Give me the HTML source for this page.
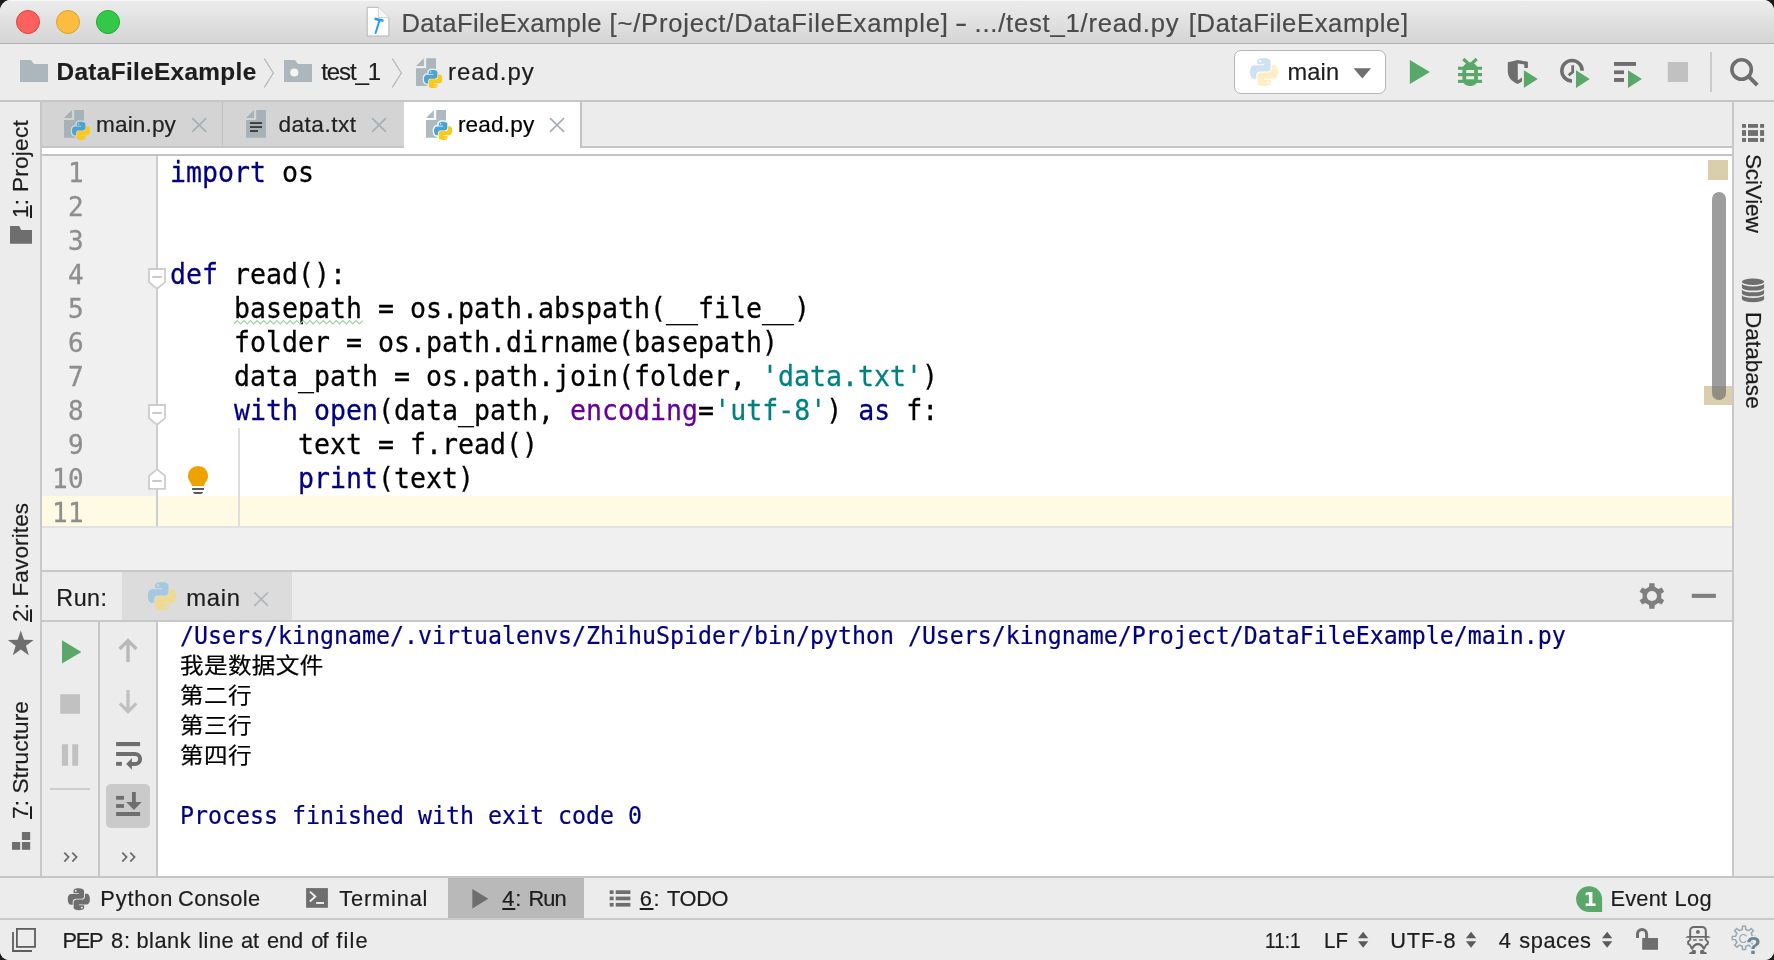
<!DOCTYPE html>
<html lang="en">
<head>
<meta charset="utf-8">
<title>DataFileExample - read.py</title>
<style>
*{box-sizing:border-box;margin:0;padding:0}
html,body{width:1774px;height:960px;overflow:hidden;background:#1c1c1c}
body{font-family:"Liberation Sans","Noto Sans CJK SC",sans-serif;color:#1d1d1d;position:relative}
#win{position:absolute;left:0;top:0;width:1774px;height:960px;background:#ececec;border-radius:11px 11px 9px 9px;overflow:hidden;will-change:transform}
.abs{position:absolute}
.t{position:absolute;white-space:nowrap;line-height:1;-webkit-text-stroke:.2px}
svg{position:absolute;overflow:visible}
/* title bar */
#titlebar{left:0;top:0;width:1774px;height:44px;background:linear-gradient(#ececec 0%,#e8e8e8 20%,#d5d5d5 100%);border-bottom:1px solid #b1b1b1;box-shadow:inset 0 1px 0 rgba(255,255,255,.55)}
.tl{position:absolute;top:10px;width:24px;height:24px;border-radius:50%}
#title{left:401.4px;top:11px;font-size:25.6px;color:#4a4a4a;white-space:pre}
#title span,.w span{position:absolute;top:0;white-space:pre}
/* nav bar */
#nav{left:0;top:44px;width:1774px;height:58px;background:#ececec;border-bottom:2px solid #c6c6c6}
/* stripes */
#lstripe{left:0;top:102px;width:42px;height:774px;background:#ececec;border-right:2px solid #c8c8c8}
#rstripe{left:1732px;top:102px;width:42px;height:774px;background:#ececec;border-left:2px solid #c8c8c8}
.vt{position:absolute;white-space:nowrap;line-height:1;font-size:22.6px;transform-origin:0 0;-webkit-text-stroke:.2px}
/* tabs */
#tabs{left:42px;top:102px;width:1690px;height:46px;background:#ececec}
.tab{position:absolute;top:0;height:46px;background:#d4d4d4;border-right:1.5px solid #c2c2c2;border-bottom:2px solid #c5c5c5}
.tab.act{background:#fff;border-right:2px solid #c4c4c4}
.tabt{font-size:22.6px;top:11.7px;color:#222}
/* editor */
#edtop{left:42px;top:154px;width:1690px;height:2px;background:#c3c3c3;z-index:2}
#editor{left:42px;top:155px;width:1690px;height:372px;background:#fff}
#gutter{left:0;top:0;width:115px;height:372px;background:#f0f0f0;border-right:1px solid #d2d2d2}
.code{position:absolute;left:128px;margin-top:1px;white-space:pre;font-family:"DejaVu Sans Mono","Liberation Mono",monospace;font-size:26.58px;line-height:34px;height:34px;color:#000;-webkit-text-stroke:.25px;transform:scaleY(1.035);transform-origin:0 27px}
.ln{position:absolute;right:1648px;margin-top:1px;white-space:pre;font-family:"DejaVu Sans Mono","Liberation Mono",monospace;font-size:26px;letter-spacing:.35px;line-height:34px;height:34px;color:#8e8e8e;-webkit-text-stroke:.3px}
.cj{font-family:"Noto Sans CJK SC",sans-serif;font-size:21.8px;letter-spacing:.38px;position:relative;top:-2px;display:inline-block;transform:scaleX(1.08);transform-origin:0 0}
.k{color:#000080}.s{color:#008080}.p{color:#660099}
/* run */
#runhead{left:42px;top:570px;width:1690px;height:52px;background:#ececec;border-top:2px solid #c8c8c8;border-bottom:2px solid #c8c8c8}
#gap{left:42px;top:526px;width:1690px;height:44px;background:#f0f0f0;border-top:2px solid #e2e2e2}
#runbody{left:42px;top:622px;width:1690px;height:254px;background:#fff}
.con{position:absolute;left:138px;margin-top:-1px;white-space:pre;font-family:"DejaVu Sans Mono","Noto Sans CJK SC",monospace;font-size:23.25px;line-height:30px;height:30px;color:#000;-webkit-text-stroke:.22px}
/* bottom */
#bbar{left:0;top:876px;width:1774px;height:44px;background:#ececec;border-top:2px solid #c6c6c6;border-bottom:2px solid #c8c8c8}
#status{left:0;top:920px;width:1774px;height:40px;background:#ececec}
.u{font-size:21.8px;top:10.25px}
.la{transform:scaleY(1.05);transform-origin:0 23px}
</style>
</head>
<body>
<div id="win">

<!-- TITLE BAR -->
<div id="titlebar" class="abs">
  <div class="tl" style="left:16px;background:#fc615d;border:1px solid #e0443e"></div>
  <div class="tl" style="left:56px;background:#fdbc40;border:1px solid #dea123"></div>
  <div class="tl" style="left:96px;background:#34c84a;border:1px solid #1aab29"></div>
  <div id="title" class="t"><span style="left:0;letter-spacing:.368px">DataFileExample </span><span style="left:208.2px;letter-spacing:.784px">[~/Project/DataFileExample] </span><span style="left:553.2px;transform:scaleX(1.45);transform-origin:0 0">- </span><span style="left:573.1px;letter-spacing:.786px">.../test_1/read.py </span><span style="left:787.4px;letter-spacing:.638px">[DataFileExample]</span></div>
</div>

<!-- NAV BAR -->
<div id="nav" class="abs">
  <div class="t" style="left:56.5px;top:16.3px;font-size:24.3px;font-weight:bold;letter-spacing:.375px;color:#1d1d1d">DataFileExample</div>
  <div class="t" style="left:321.2px;top:16.4px;font-size:24px;letter-spacing:-1.08px;color:#1d1d1d">test_1</div>
  <div class="t" style="left:448px;top:16.4px;font-size:24px;letter-spacing:.95px;color:#1d1d1d">read.py</div>
  <div class="abs" style="left:1234px;top:6px;width:152px;height:44px;background:#fff;border:1.5px solid #b4b4b4;border-radius:7px"></div>
  <div class="t" style="left:1287.5px;top:16.6px;font-size:23.6px;letter-spacing:.13px;color:#1d1d1d">main</div>
  <div class="abs" style="left:1710px;top:8px;width:2px;height:40px;background:#cbcbcb"></div>
</div>

<!-- LEFT STRIPE -->
<div id="lstripe" class="abs">
  <div class="vt" style="left:9.6px;top:115.5px;transform:rotate(-90deg);letter-spacing:.26px"><u>1</u>: Project</div>
  <div class="vt" style="left:9.6px;top:519.7px;transform:rotate(-90deg);letter-spacing:.1px"><u>2</u>: Favorites</div>
  <div class="vt" style="left:9.6px;top:717.2px;transform:rotate(-90deg);letter-spacing:.1px"><u>7</u>: Structure</div>
</div>

<!-- RIGHT STRIPE -->
<div id="rstripe" class="abs">
  <div class="vt" style="left:29.5px;top:52.0px;transform:rotate(90deg);letter-spacing:-.2px">SciView</div>
  <div class="vt" style="left:29.5px;top:209.5px;transform:rotate(90deg)">Database</div>
</div>

<!-- TABS -->
<div id="tabs" class="abs">
  <div class="abs" style="left:0;top:0;width:1690px;height:46px;border-bottom:2px solid #c5c5c5"></div>
  <div class="tab" style="left:0;width:181px"></div>
  <div class="tab" style="left:181px;width:181px;border-right:none"></div>
  <div class="tab act" style="left:362px;width:178px;height:51px;border-bottom:none"></div>
  <div class="abs" style="left:0;top:46px;width:1690px;height:6px;background:#fff"></div>
  <div class="t tabt" style="left:54px;letter-spacing:.13px">main.py</div>
  <div class="t tabt" style="left:236.5px;letter-spacing:.48px">data.txt</div>
  <div class="t tabt" style="left:415.9px;letter-spacing:.17px;color:#000">read.py</div>
</div>

<!-- EDITOR -->
<div id="edtop" class="abs"></div>
<div id="editor" class="abs">
  <div id="gutter" class="abs"></div>
  <div class="abs" style="left:0;top:341px;width:1690px;height:31px;background:#fffae3"></div>
  <div class="abs" style="left:114px;top:0;width:2px;height:372px;background:#cdcdcd"></div>
  <div class="abs" style="left:196px;top:273px;width:2px;height:99px;background:#dedede"></div>
  <div class="ln" style="top:0px">1</div><div class="code" style="top:0px"><span class="k">import</span> os</div>
  <div class="ln" style="top:34px">2</div><div class="code" style="top:34px"></div>
  <div class="ln" style="top:68px">3</div><div class="code" style="top:68px"></div>
  <div class="ln" style="top:102px">4</div><div class="code" style="top:102px"><span class="k">def</span> read():</div>
  <div class="ln" style="top:136px">5</div><div class="code" style="top:136px">    <span class="w">basepath</span> = os.path.abspath(__file__)</div>
  <div class="ln" style="top:170px">6</div><div class="code" style="top:170px">    folder = os.path.dirname(basepath)</div>
  <div class="ln" style="top:204px">7</div><div class="code" style="top:204px">    data_path = os.path.join(folder, <span class="s">'data.txt'</span>)</div>
  <div class="ln" style="top:238px">8</div><div class="code" style="top:238px">    <span class="k">with</span> <span class="k">open</span>(data_path, <span class="p">encoding</span>=<span class="s">'utf-8'</span>) <span class="k">as</span> f:</div>
  <div class="ln" style="top:272px">9</div><div class="code" style="top:272px">        text = f.read()</div>
  <div class="ln" style="top:306px">10</div><div class="code" style="top:306px">        <span class="k">print</span>(text)</div>
  <div class="ln" style="top:340px">11</div><div class="code" style="top:340px"></div>
  <div class="abs" style="left:1666px;top:5px;width:20px;height:20px;background:#d9cfad"></div>
  <div class="abs" style="left:1662px;top:231px;width:28px;height:19px;background:#d9cfad"></div>
  <div class="abs" style="left:1670px;top:37px;width:14px;height:208px;border-radius:7px;background:rgba(110,110,110,.68)"></div>
</div>

<!-- RUN -->
<div id="gap" class="abs"></div>
<div id="runhead" class="abs">
  <div class="abs" style="left:80px;top:0;width:170px;height:48px;background:#dcdcdc"></div>
  <div class="t" style="left:14.3px;top:15.1px;font-size:23.3px;letter-spacing:.52px">Run:</div>
  <div class="t" style="left:144.2px;top:13.7px;font-size:23.8px;letter-spacing:.78px">main</div>
</div>
<div id="runbody" class="abs">
  <div class="abs" style="left:0;top:0;width:115px;height:255px;background:#ececec"></div>
  <div class="abs" style="left:56px;top:0;width:2px;height:255px;background:#c6c6c6"></div>
  <div class="abs" style="left:114px;top:0;width:2px;height:255px;background:#c6c6c6"></div>
  <div class="abs" style="left:64px;top:162px;width:44px;height:44px;border-radius:5px;background:#cacaca"></div>
  <div class="abs" style="left:8px;top:166px;width:40px;height:2px;background:#cdcdcd"></div>
  <div class="con la" style="top:0px"><span class="k">/Users/kingname/.virtualenvs/ZhihuSpider/bin/python /Users/kingname/Project/DataFileExample/main.py</span></div>
  <div class="con" style="top:30px"><span class="cj">我是数据文件</span></div>
  <div class="con" style="top:60px"><span class="cj">第二行</span></div>
  <div class="con" style="top:90px"><span class="cj">第三行</span></div>
  <div class="con" style="top:120px"><span class="cj">第四行</span></div>
  <div class="con" style="top:150px"></div>
  <div class="con la" style="top:180px"><span class="k">Process finished with exit code 0</span></div>
</div>

<!-- BOTTOM BAR -->
<div id="bbar" class="abs">
  <div class="abs" style="left:448px;top:0;width:136px;height:40px;background:#b9b9b9"></div>
  <div class="t u w" style="left:100.3px"><span style="left:0.0px;letter-spacing:0.83px">Python </span><span style="left:77.8px;letter-spacing:0.34px">Console</span></div>
  <div class="t u" style="left:339.3px;letter-spacing:.825px">Terminal</div>
  <div class="t u w" style="left:502.3px"><span style="left:0.0px;letter-spacing:0.88px"><u>4</u>: </span><span style="left:26.1px;letter-spacing:-0.93px">Run</span></div>
  <div class="t u w" style="left:639.7px"><span style="left:0.0px;letter-spacing:1.68px"><u>6</u>: </span><span style="left:27.4px;letter-spacing:-0.41px">TODO</span></div>
  <div class="t u w" style="left:1610.4px"><span style="left:0;letter-spacing:.255px">Event </span><span style="left:64.1px;letter-spacing:.328px">Log</span></div>
  <div class="t" style="left:1583.5px;top:11.6px;font-family:'DejaVu Sans','Liberation Sans',sans-serif;font-size:19.2px;font-weight:bold;color:#fff;z-index:5;-webkit-text-stroke:0">1</div>
</div>

<!-- STATUS -->
<div id="status" class="abs">
  <div class="t u w" style="left:62.6px"><span style="left:0.0px;letter-spacing:-1.34px">PEP </span><span style="left:48.5px;letter-spacing:0.78px">8: </span><span style="left:73.9px;letter-spacing:0.50px">blank </span><span style="left:135.7px;letter-spacing:0.50px">line </span><span style="left:178.3px;letter-spacing:0.08px">at </span><span style="left:204.4px;letter-spacing:-0.12px">end </span><span style="left:248.6px;letter-spacing:-0.92px">of </span><span style="left:273.6px;letter-spacing:1.19px">file</span></div>
  <div class="t u" style="left:1265.3px;transform:scaleX(.872);transform-origin:0 0">11:1</div>
  <div class="t u" style="left:1324.2px;transform:scaleX(.94);transform-origin:0 0">LF</div>
  <div class="t u" style="left:1390.2px;letter-spacing:.893px">UTF-8</div>
  <div class="t u w" style="left:1498.8px"><span style="left:0.0px;letter-spacing:0.00px">4 </span><span style="left:20.5px;letter-spacing:0.53px">spaces</span></div>
</div>


<!-- ICON OVERLAY -->
<svg id="ico" width="1774" height="960" viewBox="0 0 1774 960" style="left:0;top:0;pointer-events:none">
<defs>
  <g id="pyb"><path d="M7.93,1 C4.4,1 4.62,2.55 4.62,2.55 L4.62,4.16 L7.99,4.16 L7.99,4.64 L3.28,4.64 C3.28,4.64 1,4.38 1,7.96 C1,11.54 2.98,11.41 2.98,11.41 L4.15,11.41 L4.15,9.75 C4.15,9.75 4.09,7.76 6.09,7.76 L9.43,7.76 C9.43,7.76 11.3,7.79 11.3,5.94 L11.3,2.88 C11.3,2.88 11.58,1 7.93,1 Z M6.08,2.08 C6.41,2.08 6.68,2.35 6.68,2.68 C6.68,3.02 6.41,3.29 6.08,3.29 C5.74,3.29 5.47,3.02 5.47,2.68 C5.47,2.35 5.74,2.08 6.08,2.08 Z"/></g>
  <g id="pyy"><path d="M8.07,15 C11.6,15 11.38,13.45 11.38,13.45 L11.38,11.84 L8.01,11.84 L8.01,11.36 L12.72,11.36 C12.72,11.36 15,11.62 15,8.04 C15,4.46 13.02,4.59 13.02,4.59 L11.85,4.59 L11.85,6.25 C11.85,6.25 11.91,8.24 9.91,8.24 L6.57,8.24 C6.57,8.24 4.7,8.21 4.7,10.06 L4.7,13.12 C4.7,13.12 4.42,15 8.07,15 Z M9.92,13.92 C9.59,13.92 9.32,13.65 9.32,13.32 C9.32,12.98 9.59,12.71 9.92,12.71 C10.26,12.71 10.53,12.98 10.53,13.32 C10.53,13.65 10.26,13.92 9.92,13.92 Z"/></g>
  <g id="pyfile">
    <path d="M10.2,0 H20 V27.8 H0 V10.1 H10.2 Z" fill="#9aa7b0" fill-opacity=".8"/>
    <path d="M0,7.9 L7.9,0 V7.9 Z" fill="#9aa7b0" fill-opacity=".8"/>
    <g transform="translate(6.7,10.4) scale(1.3)">
      <use href="#pyb" fill="none" stroke="var(--bg,#ececec)" stroke-width="2.2"/>
      <use href="#pyy" fill="none" stroke="var(--bg,#ececec)" stroke-width="2.2"/>
      <use href="#pyb" fill="#4aa3d3"/><use href="#pyy" fill="#fcc917"/>
    </g>
  </g>
  <g id="closex"><path d="M0,0 L14,13.7 M14,0 L0,13.7" stroke="#a7afb5" stroke-width="1.7" fill="none"/></g>
</defs>

<!-- nav icons -->
<g id="navico">
  <path d="M20,60 h11 l3,4 h14 v18 h-28 z" fill="#abb6bd"/>
  <path d="M264.3,58.6 L273.3,73 L264.3,87.4" fill="none" stroke="#b8b8b8" stroke-width="1.3"/>
  <path d="M284,60 h11 l3,4 h14 v18 h-28 z" fill="#abb6bd"/>
  <circle cx="294.3" cy="72.5" r="4.1" fill="#f4f4f4"/>
  <path d="M392.3,58.6 L401.3,73 L392.3,87.4" fill="none" stroke="#b8b8b8" stroke-width="1.3"/>
  <use href="#pyfile" x="416" y="58.2"/>
  <!-- run config python (faded) -->
  <g transform="translate(1248,56) scale(2)"><use href="#pyb" fill="#cfe2f0"/><use href="#pyy" fill="#fcefc6"/></g>
  <path d="M1353.6,68.2 H1371 L1362.3,78.4 Z" fill="#6e6e6e"/>
  <!-- run -->
  <path d="M1409.8,60 L1430,72 L1409.8,84 Z" fill="#59a869"/>
  <!-- bug -->
  <g fill="#59a869">
    <path d="M1463.3,59 L1470,65.2 M1476.7,59 L1470,65.2" stroke="#59a869" stroke-width="3.2" fill="none"/>
    <path d="M1462.4,71 C1462.4,65.5 1466,62.6 1470.1,62.6 C1474.2,62.6 1477.9,65.5 1477.9,71 V79 C1477.9,83.5 1474.2,86 1470.1,86 C1466,86 1462.4,83.5 1462.4,79 Z"/>
    <rect x="1458" y="66.7" width="24" height="3.1"/>
    <rect x="1458" y="73" width="24" height="3.2"/>
    <rect x="1458" y="79.8" width="24" height="3.1"/>
  </g>
  <rect x="1466.2" y="70" width="7.9" height="3" fill="#ececec"/>
  <rect x="1466.2" y="76.2" width="7.9" height="3.1" fill="#ececec"/>
  <!-- coverage shield -->
  <path d="M1507.8,62.2 L1517.8,59.9 L1527.9,61.8 V68 H1524.3 V64.6 L1517.8,63.6 V80.3 L1522,77.5 V81.5 L1517.8,84.1 C1511,81 1507.8,77 1507.8,71 Z" fill="#6e6e6e"/>
  <path d="M1523.9,70.3 L1537.8,79.1 L1523.9,87.9 Z" fill="#59a869" stroke="#ececec" stroke-width="1.6" paint-order="stroke"/>
  <!-- profile clock -->
  <path d="M1582.2,70.8 A10.2,10.2 0 1 0 1572,81" fill="none" stroke="#6e6e6e" stroke-width="3.5"/>
  <path d="M1572.7,65.3 V72 L1568.6,75.3" fill="none" stroke="#6e6e6e" stroke-width="2.7"/>
  <path d="M1576,70.3 L1589.8,79.1 L1576,87.9 Z" fill="#59a869" stroke="#ececec" stroke-width="1.6" paint-order="stroke"/>
  <!-- run list -->
  <rect x="1614" y="62" width="22" height="3.9" fill="#6e6e6e"/>
  <rect x="1614" y="70.4" width="10" height="3.7" fill="#6e6e6e"/>
  <rect x="1614" y="78" width="10" height="3.9" fill="#6e6e6e"/>
  <path d="M1628,70.3 L1641.9,79.1 L1628,87.9 Z" fill="#59a869"/>
  <!-- stop -->
  <rect x="1667.8" y="62" width="20.2" height="20" fill="#c1c1c1"/>
  <!-- search -->
  <circle cx="1741.6" cy="69.5" r="9.7" fill="none" stroke="#6e6e6e" stroke-width="3.6"/>
  <path d="M1748.5,76.4 L1757.3,85.1" stroke="#6e6e6e" stroke-width="4" fill="none"/>
</g>

<!-- title doc icon -->
<g>
  <path d="M367.2,7.3 H378.3 L388.9,17.6 V36 H367.2 Z" fill="#fff" stroke="#b4b4b4" stroke-width="1"/>
  <path d="M378.3,7.3 V17.6 H388.9" fill="#f6f6f6" stroke="#c6c6c6" stroke-width=".8"/>
  <path d="M375.6,33 L379.6,20" stroke="#1da1f2" stroke-width="2" stroke-linecap="round"/>
  <path d="M375.6,18.9 L382.4,20.6" stroke="#1da1f2" stroke-width="2.6" stroke-linecap="round"/>
</g>
<!-- tab icons -->
<use href="#pyfile" x="64" y="110" style="--bg:#d4d4d4"/>
<use href="#closex" x="192.2" y="118.1"/>
<g transform="translate(246,110)">
  <path d="M10.2,0 H20 V27.8 H0 V10.1 H10.2 Z" fill="#9aa7b0" fill-opacity=".8"/>
  <path d="M0,7.9 L7.9,0 V7.9 Z" fill="#9aa7b0" fill-opacity=".8"/>
  <rect x="4" y="12.1" width="12" height="1.9" fill="#3c3c3c"/><rect x="4" y="16.1" width="12" height="1.9" fill="#3c3c3c"/><rect x="4" y="20.1" width="8" height="1.9" fill="#3c3c3c"/>
</g>
<use href="#closex" x="372" y="118.1"/>
<use href="#pyfile" x="426" y="110" style="--bg:#ffffff"/>
<use href="#closex" x="550" y="118.1"/>
<!-- editor gutter icons -->
<path d="M149,269 H165 V282.2 L157,288.8 L149,282.2 Z" fill="#fff" stroke="#cdcdcd" stroke-width="1.8"/><path d="M152.2,277 H161.8" stroke="#c4c4c4" stroke-width="1.8"/>
<path d="M149,405 H165 V418.2 L157,424.8 L149,418.2 Z" fill="#fff" stroke="#cdcdcd" stroke-width="1.8"/><path d="M152.2,413 H161.8" stroke="#c4c4c4" stroke-width="1.8"/>
<path d="M149,488.8 H165 V475.8 L157,469.4 L149,475.8 Z" fill="#fff" stroke="#cdcdcd" stroke-width="1.8"/><path d="M152.2,481 H161.8" stroke="#c4c4c4" stroke-width="1.8"/>
<path d="M234,324.0 L237.30,320.60 L240.60,324.00 L243.90,320.60 L247.20,324.00 L250.50,320.60 L253.80,324.00 L257.10,320.60 L260.40,324.00 L263.70,320.60 L267.00,324.00 L270.30,320.60 L273.60,324.00 L276.90,320.60 L280.20,324.00 L283.50,320.60 L286.80,324.00 L290.10,320.60 L293.40,324.00 L296.70,320.60 L300.00,324.00 L303.30,320.60 L306.60,324.00 L309.90,320.60 L313.20,324.00 L316.50,320.60 L319.80,324.00 L323.10,320.60 L326.40,324.00 L329.70,320.60 L333.00,324.00 L336.30,320.60 L339.60,324.00 L342.90,320.60 L346.20,324.00 L349.50,320.60 L352.80,324.00 L356.10,320.60 L359.40,324.00 L362.70,320.60" fill="none" stroke="#a3d19f" stroke-width="1.2"/>
<path d="M198,465.9 a10.1,10.1 0 0 1 10.1,10.1 c0,4.2 -3.1,6.2 -4.1,9.9 h-12 c-1,-3.7 -4.1,-5.7 -4.1,-9.9 a10.1,10.1 0 0 1 10.1,-10.1 z" fill="#eda200"/>
<rect x="192.1" y="488" width="11.9" height="2" fill="#595959"/>
<path d="M193,491.9 H203 C202.5,493.4 201.5,493.9 200.5,493.9 H195.5 C194.5,493.9 193.5,493.4 193,491.9 Z" fill="#595959"/>
<!-- left stripe icons -->
<path d="M10,226 H19.2 L21.2,230 H32 V243.8 H10 Z" fill="#6e6e6e"/>
<path d="M20.80,630.60 L23.97,639.83 L33.73,640.00 L25.94,645.87 L28.79,655.20 L20.80,649.60 L12.81,655.20 L15.66,645.87 L7.87,640.00 L17.63,639.83 Z" fill="#6e6e6e"/>
<rect x="21.9" y="832" width="8.3" height="8" fill="#6e6e6e"/><rect x="12" y="842" width="8.2" height="7.8" fill="#6e6e6e"/><rect x="21.9" y="842" width="8.3" height="7.8" fill="#6e6e6e"/>
<!-- right stripe icons -->
<g fill="#6e6e6e">
  <rect x="1742" y="124" width="4" height="3.8"/><rect x="1748" y="124" width="10" height="3.8"/><rect x="1760.1" y="124" width="4" height="3.8"/>
  <rect x="1742" y="130.1" width="4" height="5.8"/><rect x="1748" y="130.1" width="10" height="5.8"/><rect x="1760.1" y="130.1" width="4" height="5.8"/>
  <rect x="1742" y="138" width="4" height="3.9"/><rect x="1748" y="138" width="10" height="3.9"/><rect x="1760.1" y="138" width="4" height="3.9"/>
  <ellipse cx="1753" cy="281.7" rx="11.1" ry="3.2"/>
  <path d="M1741.9,283.4 A11.1,3.1 0 0 0 1764.1,283.4 V287.5 A11.1,3.1 0 0 1 1741.9,287.5 Z"/>
  <path d="M1741.9,289.2 A11.1,3.1 0 0 0 1764.1,289.2 V293.2 A11.1,3.1 0 0 1 1741.9,293.2 Z"/>
  <path d="M1741.9,294.9 A11.1,3.1 0 0 0 1764.1,294.9 V299.1 A11.1,3.1 0 0 1 1741.9,299.1 Z"/>
</g>
<!-- run header icons -->
<g transform="translate(145.9,580) scale(2)"><use href="#pyb" fill="#a6c8de"/><use href="#pyy" fill="#f0da8f"/></g>
<path d="M254.3,592.4 L268,605.9 M268,592.4 L254.3,605.9" stroke="#afb7bc" stroke-width="1.7" fill="none"/>
<path d="M1649.06,586.83 L1649.32,583.26 L1654.48,583.26 L1654.74,586.83 L1658.42,588.96 L1661.64,587.39 L1664.23,591.87 L1661.26,593.87 L1661.26,598.13 L1664.23,600.13 L1661.64,604.61 L1658.42,603.04 L1654.74,605.17 L1654.48,608.74 L1649.32,608.74 L1649.06,605.17 L1645.38,603.04 L1642.16,604.61 L1639.57,600.13 L1642.54,598.13 L1642.54,593.87 L1639.57,591.87 L1642.16,587.39 L1645.38,588.96 Z" fill="#7f7f7f"/><circle cx="1651.9" cy="596" r="5.1" fill="#ececec"/>
<rect x="1691.8" y="593.8" width="24.1" height="4.1" fill="#7f7f7f"/>
<!-- run left toolbar -->
<path d="M62,640.3 L81.4,652 L62,663.5 Z" fill="#59a869"/>
<rect x="60.2" y="694.2" width="19.8" height="19.6" fill="#c1c1c1"/>
<rect x="61.9" y="744.2" width="6.2" height="21.6" fill="#c1c1c1"/><rect x="72.2" y="744.2" width="6" height="21.6" fill="#c1c1c1"/>
<path d="M128,662 V641 M119.6,649 L128,640.6 L136.4,649" fill="none" stroke="#b9b9b9" stroke-width="3.4"/>
<path d="M128,690 V711 M119.9,703.4 L128,711.6 L136.3,703.4" fill="none" stroke="#c1c1c1" stroke-width="3.4"/>
<g fill="#6e6e6e">
  <rect x="116.1" y="742" width="24" height="4.1"/>
  <path d="M116.1,753.9 H135 A5.1,5.1 0 0 1 135,764.1 H131" fill="none" stroke="#6e6e6e" stroke-width="4"/>
  <path d="M126.2,763.9 L131.9,757.9 V769.7 Z"/>
  <rect x="116.1" y="761.9" width="5.8" height="3.9"/>
  <rect x="116.1" y="795.9" width="7.9" height="3.8"/><rect x="116.1" y="804.1" width="7.9" height="3.8"/><rect x="116.1" y="812" width="24" height="4"/>
  <rect x="132" y="792" width="3.8" height="11"/><path d="M126.2,802.1 H141.7 L133.95,809.9 Z"/>
</g>
<path d="M64.3,852.6 L68.6,857.1 L64.3,861.6 M72.3,852.6 L76.6,857.1 L72.3,861.6" fill="none" stroke="#6e6e6e" stroke-width="1.8"/>
<path d="M122.3,852.6 L126.6,857.1 L122.3,861.6 M130.3,852.6 L134.6,857.1 L130.3,861.6" fill="none" stroke="#6e6e6e" stroke-width="1.8"/>
<!-- bottom bar icons -->
<g transform="translate(66.2,886.6) scale(1.58)" fill="#6e6e6e"><use href="#pyb"/><use href="#pyy"/></g>
<rect x="306.1" y="888.1" width="21.8" height="19.7" fill="#6e6e6e"/>
<path d="M309.9,891.6 L315.3,896.5 L309.9,901.5" fill="none" stroke="#f2f2f2" stroke-width="1.8"/><rect x="316.1" y="902.1" width="7.9" height="1.8" fill="#f7f7f7"/>
<path d="M472.3,889 L488.3,898.7 L472.3,908.4 Z" fill="#6e6e6e"/>
<g fill="#6e6e6e">
  <rect x="609.7" y="890.3" width="3.9" height="3.7"/><rect x="615.7" y="890.3" width="14.7" height="3.7"/>
  <rect x="609.7" y="896.6" width="3.9" height="3.7"/><rect x="615.7" y="896.6" width="14.7" height="3.7"/>
  <rect x="609.7" y="902.9" width="3.9" height="3.7"/><rect x="615.7" y="902.9" width="14.7" height="3.7"/>
</g>
<path d="M1589,886.2 a12.9,12.9 0 1 0 0,25.8 H1602.1 V899.1 a12.9,12.9 0 0 0 -13.1,-12.9 Z" fill="#59a869"/>
<!-- status bar icons -->
<rect x="16.9" y="928.9" width="18.1" height="18" fill="none" stroke="#5e5e5e" stroke-width="1.8"/>
<path d="M13,932.1 V951 H32" fill="none" stroke="#5e5e5e" stroke-width="1.8"/>
<g fill="#5a5a5a">
  <path d="M1358,938.2 H1368.3 L1363.15,931.7 Z"/><path d="M1358,941.3 H1368.3 L1363.15,947.8 Z"/>
  <path d="M1465.9,938.2 H1476.2 L1471.05,931.7 Z"/><path d="M1465.9,941.3 H1476.2 L1471.05,947.8 Z"/>
  <path d="M1602,938.2 H1612.3 L1607.15,931.7 Z"/><path d="M1602,941.3 H1612.3 L1607.15,947.8 Z"/>
</g>
<rect x="1642.2" y="938" width="15.8" height="11.8" fill="#6e6e6e"/>
<path d="M1637.5,938 V934 a4.55,4.55 0 0 1 9.1,0 V938.5" fill="none" stroke="#6e6e6e" stroke-width="3"/>
<!-- hector -->
<g fill="none" stroke="#6a6a6a" stroke-width="2">
  <path d="M1690.2,940.4 V930.6 a3.7,3.7 0 0 1 3.7,-3.7 h8.2 a3.7,3.7 0 0 1 3.7,3.7 V940.4"/>
  <path d="M1690,940.6 C1687.4,940.8 1687.4,944 1689.6,944.6 C1690.6,945 1690.6,947.4 1692.6,949.4 M1706,940.6 C1708.6,940.8 1708.6,944 1706.4,944.6 C1705.4,945 1705.4,947.4 1703.4,949.4" stroke-width="1.9"/>
  <path d="M1692.4,948.4 C1693.8,945.2 1695.6,944.2 1698,944.2 C1700.4,944.2 1702.2,945.2 1703.6,948.4" stroke-width="2.2"/>
  <path d="M1693.1,940 H1696.7 M1699.1,940 H1702.9" stroke-width="1.6"/>
</g>
<path d="M1685.1,937.5 L1687.6,936.1 H1708.4 L1710.9,937.5 L1708.4,937.8 H1687.6 Z" fill="#6a6a6a"/>
<path d="M1692.4,949.4 L1695.9,950.5 L1695.7,953.9 H1689 L1689.6,952.6 L1692,951.4 Z M1703.6,949.4 L1700.1,950.5 L1700.3,953.9 H1707 L1706.4,952.6 L1704,951.4 Z" fill="#6a6a6a"/>
<circle cx="1697.9" cy="931.9" r="1.9" fill="#6a6a6a"/>
<!-- gear ? -->
<path d="M1742.29,929.47 L1742.47,926.20 L1745.53,926.20 L1745.71,929.47 L1748.75,930.73 L1751.19,928.54 L1753.36,930.71 L1751.17,933.15 L1752.43,936.19 L1755.70,936.37 L1755.70,939.43 L1752.43,939.61 L1751.17,942.65 L1753.36,945.09 L1751.19,947.26 L1748.75,945.07 L1745.71,946.33 L1745.53,949.60 L1742.47,949.60 L1742.29,946.33 L1739.25,945.07 L1736.81,947.26 L1734.64,945.09 L1736.83,942.65 L1735.57,939.61 L1732.30,939.43 L1732.30,936.37 L1735.57,936.19 L1736.83,933.15 L1734.64,930.71 L1736.81,928.54 L1739.25,930.73 Z" fill="none" stroke="#9aa7b0" stroke-width="1.5"/>
<text x="1738.6" y="942.6" font-family="Liberation Sans, sans-serif" font-size="12.5" fill="#9aa7b0">C</text>
<text x="1746" y="953.7" font-family="Liberation Sans, sans-serif" font-size="24.5" font-weight="bold" fill="#6e8596" stroke="#ececec" stroke-width="2.4" paint-order="stroke">?</text>
</svg>
</div>
</body>
</html>
